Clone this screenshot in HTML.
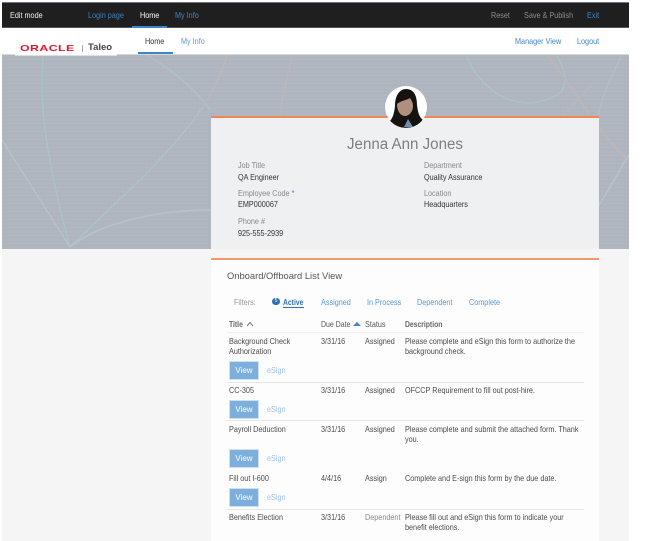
<!DOCTYPE html>
<html><head><meta charset="utf-8">
<style>
html,body{margin:0;padding:0;background:#fff}
#p{position:relative;width:647px;height:541px;overflow:hidden;background:#fff;font-family:"Liberation Sans",sans-serif;font-size:8.2px;color:#4a4a4a;filter:blur(.3px)}
#p div,#p span.a{position:absolute;white-space:nowrap}
.t{line-height:10px;height:10px;transform:translateY(1px) scaleX(.885);transform-origin:left center}
.m{transform:translateY(1px) scaleX(.83);font-weight:bold}
.b{color:#3f86c8}
.l{color:#85888c}
.v{color:#333}
.btn{background:#7dafdc;border:1px solid #cfe0f0;box-sizing:border-box;width:30px;height:19px;left:229px;color:#fff;text-align:center;line-height:17px;font-size:8px}
.e{color:#9cc0e2;left:267px}
.hr{left:227px;width:357px;height:1px;background:#e6e6e6}
</style></head><body><div id="p">
<div style="left:2px;top:2px;width:627px;height:539px;background:#f5f5f5"></div>
<div style="left:2px;top:2px;width:627px;height:26px;background:#1f1f1f;border-top:1px solid #6b7684;border-bottom:1px solid #555;box-sizing:border-box"></div>
<div class="t" style="left:10px;top:10px;color:#eee">Edit mode</div>
<div class="t b" style="left:88px;top:10px;color:#3f7fbd">Login page</div>
<div class="t" style="left:140px;top:10px;color:#fff">Home</div>
<div style="left:132px;top:26px;width:35px;height:2px;background:#3f86c8"></div>
<div class="t b" style="left:174.500px;top:10px">My Info</div>
<div class="t" style="left:490.500px;top:10px;color:#8d8d8d">Reset</div>
<div class="t" style="left:524px;top:10px;color:#8d8d8d">Save &amp; Publish</div>
<div class="t b" style="left:587px;top:10px">Exit</div>

<div style="left:2px;top:28px;width:627px;height:27px;background:#fff;border-bottom:1px solid #d8d8d8;box-sizing:border-box"></div>
<div class="t" style="left:145px;top:36px;color:#333">Home</div>
<div style="left:138px;top:52px;width:35px;height:2px;background:#3f86c8"></div>
<div class="t b" style="left:180.500px;top:36px;color:#5a96d2">My Info</div>
<div class="t b" style="left:515px;top:36px">Manager View</div>
<div class="t b" style="left:576.500px;top:36px">Logout</div>

<svg style="position:absolute;left:2px;top:55px" width="627" height="194" viewBox="0 0 627 194">
<defs><pattern id="w" width="4" height="4" patternUnits="userSpaceOnUse"><rect width="4" height="4" fill="#b0b6c0"/><rect width="1" height="4" fill="#b2b8c1"/><rect y="2" width="4" height="1" fill="#aeb4be"/></pattern></defs>
<rect width="627" height="194" fill="url(#w)"/>
<g fill="none" stroke-width="1.5" opacity=".55">
<path d="M41 0C38 40 40 90 68 192" stroke="#a8cccc"/>
<path d="M0 85L68 192" stroke="#b4d0d0"/>
<path d="M68 192C110 150 160 110 201 52" stroke="#a8cccc"/>
<path d="M145 0C170 15 195 35 208 55" stroke="#a8cccc"/>
<path d="M225 0C220 20 210 35 201 52" stroke="#cdb5aa"/>
<path d="M290 0C285 25 280 40 278 60" stroke="#c6b7b0"/>
<path d="M68 192C95 170 150 155 209 155" stroke="#bcd0d0"/>
<path d="M464 0C480 40 520 60 555 40C570 30 560 10 555 0" stroke="#a8cccc"/>
<path d="M545 0C570 30 600 85 627 105" stroke="#cdb5aa"/>
<path d="M590 30C570 50 550 70 540 95" stroke="#c6b7b0"/>
<path d="M620 0C605 30 590 60 597 90" stroke="#b8c4c6"/>
<path d="M597 150C610 130 620 110 627 100" stroke="#bcd0d0"/>
</g></svg>

<div style="left:211px;top:116px;width:388px;height:133px;background:#eff0f2;border-top:2px solid #ee8554;box-sizing:border-box"></div>
<div style="left:385px;top:86px;width:42px;height:42px;border-radius:50%;background:#fff;overflow:hidden">
<svg width="42" height="42" viewBox="0 0 42 42">
<path d="M4 36C8 32 9 28 10 20C10 9 15 3 21 3C29 3 32 10 32 19C33 27 34 31 39 35C34 44 10 44 4 36Z" fill="#16120f"/>
<path d="M12 18C15 15 22 14 25 12C27 15 28 17 28 20C28 26 24 30 20 30C16 30 12 26 12 18Z" fill="#b08f80"/>
<path d="M19 41L23 33L28 41Z" fill="#6f8fb0"/>
</svg></div>
<div class="t" style="left:347px;top:135px;height:18px;line-height:18px;font-size:15.500px;color:#7d8083;transform:translateY(1px) scaleX(.975)">Jenna Ann Jones</div>
<div class="t l" style="left:238px;top:160px">Job Title</div>
<div class="t v" style="left:238px;top:172px">QA Engineer</div>
<div class="t l" style="left:238px;top:188px">Employee Code <span style="color:#3f86c8">*</span></div>
<div class="t v" style="left:238px;top:199px">EMP000067</div>
<div class="t l" style="left:238px;top:216px">Phone #</div>
<div class="t v" style="left:238px;top:228px">925-555-2939</div>
<div class="t l" style="left:424px;top:160px">Department</div>
<div class="t v" style="left:424px;top:172px">Quality Assurance</div>
<div class="t l" style="left:424px;top:188px">Location</div>
<div class="t v" style="left:424px;top:199px">Headquarters</div>

<div style="left:211px;top:258px;width:388px;height:283px;background:#fdfdfd;border-top:2px solid #f39a6c;box-sizing:border-box"></div>
<div class="t" style="left:227px;top:272px;font-size:9.500px;color:#555;transform:translateY(0) scaleX(.985)">Onboard/Offboard List View</div>
<div class="t l" style="left:234px;top:297px;color:#999">Filters:</div>
<div style="left:272px;top:298px;width:8px;height:7px;border-radius:4px;background:#2f72b4;color:#fff;font-size:5px;line-height:7px;text-align:center">5</div>
<div class="t m" style="left:283px;top:297px;color:#2f72b4">Active</div>
<div style="left:283px;top:307px;width:21px;height:1px;background:#2f72b4"></div>
<div class="t b" style="left:320.500px;top:297px;color:#5a96d2">Assigned</div>
<div class="t b" style="left:366.500px;top:297px;color:#5a96d2">In Process</div>
<div class="t b" style="left:417px;top:297px;color:#5a96d2">Dependent</div>
<div class="t b" style="left:468.500px;top:297px;color:#5a96d2">Complete</div>

<div class="t m" style="left:229px;top:319px;color:#666">Title</div>
<svg style="position:absolute;left:246px;top:321px" width="8" height="6"><path d="M1 5L4 1.500L7 5" fill="none" stroke="#777" stroke-width="1"/></svg>
<div class="t" style="left:321px;top:319px;color:#555;transform:translateY(1px) scaleX(.85)">Due Date</div>
<svg style="position:absolute;left:353px;top:322px" width="8" height="4"><path d="M0 4L4 0L8 4Z" fill="#3f86c8"/></svg>
<div class="t" style="left:365px;top:319px;color:#555">Status</div>
<div class="t m" style="left:405px;top:319px;color:#666">Description</div>
<div class="hr" style="top:332px;background:#f0f0f0"></div>

<div class="t" style="left:229px;top:336px">Background Check</div>
<div class="t" style="left:229px;top:346px">Authorization</div>
<div class="t" style="left:321px;top:336px">3/31/16</div>
<div class="t" style="left:365px;top:336px">Assigned</div>
<div class="t" style="left:405px;top:336px">Please complete and eSign this form to authorize the</div>
<div class="t" style="left:405px;top:346px">background check.</div>
<div class="btn" style="top:361px">View</div>
<div class="t e" style="top:365px">eSign</div>
<div class="hr" style="top:382px"></div>

<div class="t" style="left:229px;top:385px">CC-305</div>
<div class="t" style="left:321px;top:385px">3/31/16</div>
<div class="t" style="left:365px;top:385px">Assigned</div>
<div class="t" style="left:405px;top:385px">OFCCP Requirement to fill out post-hire.</div>
<div class="btn" style="top:400px">View</div>
<div class="t e" style="top:404px">eSign</div>
<div class="hr" style="top:420px"></div>

<div class="t" style="left:229px;top:424px">Payroll Deduction</div>
<div class="t" style="left:321px;top:424px">3/31/16</div>
<div class="t" style="left:365px;top:424px">Assigned</div>
<div class="t" style="left:405px;top:424px">Please complete and submit the attached form. Thank</div>
<div class="t" style="left:405px;top:434px">you.</div>
<div class="btn" style="top:449px">View</div>
<div class="t e" style="top:453px">eSign</div>

<div class="t" style="left:229px;top:473px">Fill out I-600</div>
<div class="t" style="left:321px;top:473px">4/4/16</div>
<div class="t" style="left:365px;top:473px">Assign</div>
<div class="t" style="left:405px;top:473px">Complete and E-sign this form by the due date.</div>
<div class="btn" style="top:488px">View</div>
<div class="t e" style="top:492px">eSign</div>
<div class="hr" style="top:509px"></div>

<div class="t" style="left:229px;top:512px">Benefits Election</div>
<div class="t" style="left:321px;top:512px">3/31/16</div>
<div class="t l" style="left:365px;top:512px">Dependent</div>
<div class="t" style="left:405px;top:512px">Please fill out and eSign this form to indicate your</div>
<div class="t" style="left:405px;top:522px">benefit elections.</div>

<div style="left:15px;top:42px;width:102px;height:14px;background:#fff;border-bottom:1px solid #ddd;box-sizing:border-box"></div>
<div class="t" style="left:20px;top:42px;height:12px;line-height:12px;font-size:8.500px;font-weight:bold;color:#e8112d;letter-spacing:.3px;transform:scaleX(1.45)">ORACLE</div>
<div style="left:82px;top:45px;width:1px;height:7px;background:#aaa"></div>
<div class="t" style="left:88px;top:42px;height:12px;line-height:12px;font-size:9.500px;font-weight:bold;color:#444;transform:none">Taleo</div>
</div></body></html>
